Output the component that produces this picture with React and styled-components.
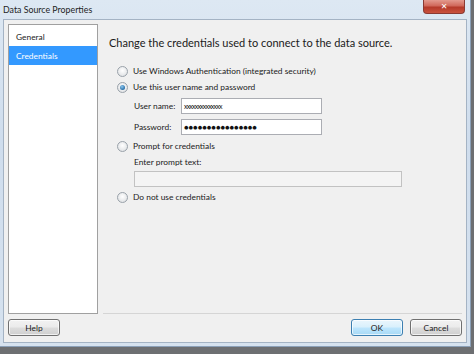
import React from 'react';
import styled, { createGlobalStyle } from 'styled-components';

const Global = createGlobalStyle`
  html, body {
    margin: 0;
    padding: 0;
    background: #6d6f72;
  }
  body {
    width: 474px;
    height: 354px;
    overflow: hidden;
    font-family: Lato, "Noto Sans", sans-serif;
  }
`;

const Window = styled.div`
  width: 471px;
  height: 347px;
  box-sizing: border-box;
  background: linear-gradient(180deg, #dde8f3 0%, #cfdded 40%, #d6e2ef 100%);
  border-right: 1px solid #8ba0b8;
  border-bottom: 1px solid #8ba0b8;
  display: flex;
  flex-direction: column;
  padding: 0 3px 3px 3px;
`;

const TitleBar = styled.div`
  height: 19px;
  display: flex;
  align-items: flex-start;
  justify-content: space-between;
`;

const Title = styled.div`
  font-size: 8.8px;
  color: #1e1e1e;
  padding-top: 4px;
`;

const CloseButton = styled.div`
  width: 40px;
  height: 13px;
  margin-right: 2px;
  border: 1px solid #8a3a33;
  border-top: none;
  border-radius: 0 0 4px 4px;
  background: linear-gradient(180deg, #e39a8e 0%, #d0685a 45%, #b53a2a 55%, #c9523e 100%);
  display: flex;
  align-items: center;
  justify-content: center;
  color: #fff;
  font-family: "DejaVu Sans", sans-serif;
  font-size: 8px;
  font-weight: bold;
  line-height: 1;
`;

const Client = styled.div`
  flex: 1;
  background: #f0f0f0;
  border: 1px solid #a4b3c4;
  display: flex;
  flex-direction: column;
  padding: 4px 4px 6px 4px;
`;

const Main = styled.div`
  flex: 1;
  display: flex;
  gap: 5px;
`;

const Nav = styled.div`
  width: 88px;
  background: #fff;
  border: 1px solid #a0a0a0;
  display: flex;
  flex-direction: column;
  padding-top: 2px;
`;

const NavItem = styled.div`
  height: 19px;
  display: flex;
  align-items: center;
  padding-left: 7px;
  font-size: 8.4px;
  color: ${p => (p.$active ? '#ffffff' : '#1b1b1b')};
  background: ${p => (p.$active ? '#3399ff' : 'transparent')};
`;

const Content = styled.div`
  flex: 1;
  display: flex;
  flex-direction: column;
  border-bottom: 1px solid #d5d5d5;
  padding-left: 6px;
`;

const Heading = styled.div`
  font-size: 11px;
  color: #1a1a1a;
  margin-top: 12px;
  margin-bottom: 14px;
`;

const Options = styled.div`
  display: flex;
  flex-direction: column;
  padding-left: 8px;
`;

const RadioRow = styled.label`
  display: flex;
  align-items: center;
  gap: 5px;
  height: 16px;
  font-size: 8.4px;
  color: #1b1b1b;
`;

const RadioCircle = styled.span`
  width: 9px;
  height: 9px;
  border-radius: 50%;
  border: 1px solid #9aa2aa;
  background: radial-gradient(circle at 50% 40%, #ffffff 0%, #e4e6e8 70%, #cfd3d7 100%);
  display: flex;
  align-items: center;
  justify-content: center;
  flex-shrink: 0;

  &::after {
    content: '';
    width: 5px;
    height: 5px;
    border-radius: 50%;
    background: radial-gradient(circle at 40% 35%, #8bc6ee 0%, #2a6fa8 70%, #1b4e7d 100%);
    display: ${p => (p.$checked ? 'block' : 'none')};
  }
`;

const Fields = styled.div`
  display: grid;
  grid-template-columns: 47px 141px;
  row-gap: 5px;
  align-items: center;
  padding-left: 17px;
  margin: 3px 0 3px;
`;

const FieldLabel = styled.span`
  font-size: 8.4px;
  color: #1b1b1b;
  white-space: nowrap;
`;

const TextBox = styled.div`
  height: 16px;
  box-sizing: border-box;
  border: 1px solid ${p => (p.$disabled ? '#c2c2c2' : '#abadb3')};
  background: ${p => (p.$disabled ? '#f4f4f4' : '#ffffff')};
  display: flex;
  align-items: center;
  padding-left: 2px;
  font-size: ${p => (p.$dots ? '7.6px' : '7px')};
  color: #111;
  letter-spacing: ${p => (p.$dots ? '0px' : '-0.8px')};
  overflow: hidden;
  white-space: nowrap;
`;

const PromptBlock = styled.div`
  display: flex;
  flex-direction: column;
  gap: 2px;
  padding-left: 17px;
  margin: 1px 0 2px;
`;

const PromptLabel = styled.span`
  font-size: 8.4px;
  color: #1b1b1b;
  height: 14px;
  display: flex;
  align-items: center;
`;

const PromptBox = styled(TextBox)`
  width: 268px;
`;

const Footer = styled.div`
  display: flex;
  align-items: center;
  justify-content: space-between;
  padding-top: 5px;
`;

const ButtonGroup = styled.div`
  display: flex;
  gap: 7px;
`;

const Button = styled.div`
  width: 52px;
  height: 17px;
  box-sizing: border-box;
  border: 1px solid ${p => (p.$default ? '#3c7fb1' : '#707070')};
  border-radius: 3px;
  background: ${p =>
    p.$default
      ? 'linear-gradient(180deg, #eaf6fd 0%, #d9f0fc 48%, #bee6fd 52%, #a7d9f5 100%)'
      : 'linear-gradient(180deg, #f2f2f2 0%, #ebebeb 48%, #dddddd 52%, #cfcfcf 100%)'};
  box-shadow: inset 0 0 0 1px rgba(255, 255, 255, 0.7);
  display: flex;
  align-items: center;
  justify-content: center;
  font-size: 8.4px;
  color: #1b1b1b;
`;

const Radio = ({ checked, children }) => (
  <RadioRow>
    <RadioCircle $checked={checked} />
    {children}
  </RadioRow>
);

export default function App() {
  return (
    <>
      <Global />
      <Window>
        <TitleBar>
          <Title>Data Source Properties</Title>
          <CloseButton>✕</CloseButton>
        </TitleBar>
        <Client>
          <Main>
            <Nav>
              <NavItem>General</NavItem>
              <NavItem $active>Credentials</NavItem>
            </Nav>
            <Content>
              <Heading>Change the credentials used to connect to the data source.</Heading>
              <Options>
                <Radio>Use Windows Authentication (integrated security)</Radio>
                <Radio checked>Use this user name and password</Radio>
                <Fields>
                  <FieldLabel>User name:</FieldLabel>
                  <TextBox>xxxxxxxxxxxxxx</TextBox>
                  <FieldLabel>Password:</FieldLabel>
                  <TextBox $dots>●●●●●●●●●●●●●●●●</TextBox>
                </Fields>
                <Radio>Prompt for credentials</Radio>
                <PromptBlock>
                  <PromptLabel>Enter prompt text:</PromptLabel>
                  <PromptBox $disabled />
                </PromptBlock>
                <Radio>Do not use credentials</Radio>
              </Options>
            </Content>
          </Main>
          <Footer>
            <Button>Help</Button>
            <ButtonGroup>
              <Button $default>OK</Button>
              <Button>Cancel</Button>
            </ButtonGroup>
          </Footer>
        </Client>
      </Window>
    </>
  );
}
